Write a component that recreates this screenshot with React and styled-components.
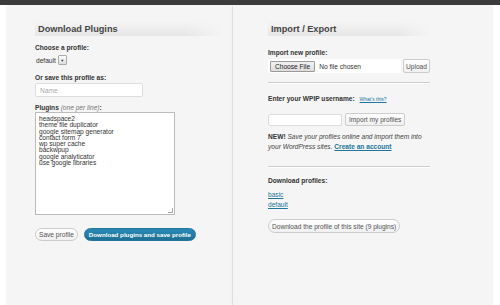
import React from "react";
import styled, { createGlobalStyle } from "styled-components";

const Global = createGlobalStyle`
  html, body { margin: 0; padding: 0; background: #fff; }
  body { font-family: "Liberation Sans", Arial, sans-serif; color: #333; }
`;

const TopBar = styled.div`
  height: 5px;
  background: #3b3b3b;
`;

const Wrap = styled.div`
  display: flex;
  padding: 1px 8px 0 7px;
  height: 299px;
`;

const Panel = styled.div`
  background: #f5f5f5;
  box-shadow: 0 0 2px rgba(0, 0, 0, 0.12);
  padding: 15px 0 0 ${p => p.$left}px;
  width: ${p => p.$width ? p.$width + "px" : "auto"};
  flex: ${p => p.$width ? "none" : 1};
  box-sizing: border-box;
  border-right: ${p => p.$divider ? "1px solid #e8e8e8" : "none"};
`;

const Heading = styled.h3`
  margin: 0 0 ${p => p.$mb}px;
  width: ${p => p.$w}px;
  height: 15px;
  line-height: 16px;
  padding-left: 3px;
  box-sizing: border-box;
  font-size: 9.2px;
  font-weight: bold;
  color: #464646;
  background:
    linear-gradient(to right, rgba(245,245,245,0) 80%, #f5f5f5),
    linear-gradient(#f5f5f5, #e6e6e6);
`;

const Label = styled.div`
  font-size: 6.6px;
  line-height: 8px;
  font-weight: bold;
  color: #333;
  margin: ${p => p.$m || "0"};
  em { font-weight: normal; font-style: italic; color: #777; }
`;

const SelectBox = styled.div`
  display: flex;
  width: fit-content;
  align-items: center;
  height: 10px;
  font-size: 6.6px;
  color: #333;
  margin: 3px 0 9px 1px;
`;

const Arrow = styled.span`
  display: inline-flex;
  align-items: center;
  justify-content: center;
  width: 9px;
  height: 10px;
  margin-left: 2px;
  border: 1px solid #aaa;
  border-radius: 1px;
  background: linear-gradient(#fff, #ddd);
  box-sizing: border-box;
  font-size: 4px;
  color: #333;
`;

const TextInput = styled.div`
  width: ${p => p.$w}px;
  height: ${p => p.$h || 14}px;
  box-sizing: border-box;
  background: #fff;
  border: 1px solid #ddd;
  border-radius: 2px;
  font-size: 6.6px;
  color: #aaa;
  padding: 3px 0 0 4px;
  margin: ${p => p.$m || 0};
`;

const TextArea = styled.div`
  position: relative;
  width: 140px;
  height: 103px;
  box-sizing: border-box;
  background: #fff;
  border: 1px solid #bbb;
  padding: 3px 3px;
  font-size: 6.6px;
  line-height: 6.3px;
  color: #333;
  margin: 0 0 13px;
  white-space: pre;
  &::after {
    content: "";
    position: absolute;
    right: 1px;
    bottom: 1px;
    width: 4px;
    height: 4px;
    border-right: 1px solid #aaa;
    border-bottom: 1px solid #aaa;
  }
`;

const Row = styled.div`
  display: flex;
  align-items: center;
  gap: ${p => p.$gap || 3}px;
  margin: ${p => p.$m || 0};
`;

const Button = styled.button`
  font-family: inherit;
  font-size: ${p => p.$primary ? 6.2 : 6.6}px;
  height: ${p => p.$h || 14}px;
  padding: 0 ${p => p.$px || 4}px;
  border-radius: ${p => p.$round ? 8 : 2}px;
  border: 1px solid ${p => p.$primary ? "#21759b" : "#ccc"};
  background: ${p => p.$primary ? "linear-gradient(#2a8bb7, #1e6f94)" : "linear-gradient(#fefefe, #f0f0f0)"};
  color: ${p => p.$primary ? "#fff" : "#555"};
  font-weight: ${p => p.$primary ? "bold" : "normal"};
  cursor: pointer;
  white-space: nowrap;
`;

const FileField = styled.div`
  display: flex;
  align-items: center;
  width: 133px;
  height: 14px;
  box-sizing: border-box;
  background: #fff;
  padding-left: 2px;
  gap: 4px;
  font-size: 6.6px;
  color: #333;
`;

const ChooseBtn = styled.span`
  display: inline-flex;
  align-items: center;
  height: 11px;
  padding: 0 4px;
  border: 1px solid #999;
  border-radius: 1px;
  background: linear-gradient(#f3f3f3, #ddd);
  box-sizing: border-box;
  font-size: 6.6px;
  color: #222;
`;

const Divider = styled.hr`
  width: 162px;
  margin: ${p => p.$m};
  border: 0;
  border-top: 1px solid #ccc;
  border-bottom: 1px solid #fff;
`;

const SmallLink = styled.a`
  font-size: 5px;
  font-weight: normal;
  color: #21759b;
  text-decoration: underline;
  margin-left: 3px;
`;

const Note = styled.p`
  margin: 0;
  font-size: 6.6px;
  line-height: 10px;
  color: #333;
  width: 162px;
  em { font-style: italic; color: #444; }
  a { color: #21759b; font-weight: bold; text-decoration: underline; }
`;

const ProfileLink = styled.a`
  display: block;
  font-size: 6.6px;
  line-height: 10px;
  color: #21759b;
  text-decoration: underline;
`;

const plugins = [
  "headspace2",
  "theme file duplicator",
  "google sitemap generator",
  "contact form 7",
  "wp super cache",
  "backwpup",
  "google analyticator",
  "use google libraries",
];

export default function App() {
  return (
    <>
      <Global />
      <TopBar />
      <Wrap>
        <Panel $width={226} $left={28} $divider>
          <Heading $w={188} $mb={8}>Download Plugins</Heading>
          <Label>Choose a profile:</Label>
          <SelectBox>
            default<Arrow>▼</Arrow>
          </SelectBox>
          <Label>Or save this profile as:</Label>
          <TextInput $w={108} $m="1px 0 7px">Name</TextInput>
          <Label>
            Plugins <em>(one per line)</em>:
          </Label>
          <TextArea>{plugins.join("\n")}</TextArea>
          <Row $gap={6}>
            <Button $round $h={13} $px={3}>Save profile</Button>
            <Button $round $primary $h={13} $px={4}>
              Download plugins and save profile
            </Button>
          </Row>
        </Panel>
        <Panel $left={35}>
          <Heading $w={162} $mb={13}>Import / Export</Heading>
          <Label>Import new profile:</Label>
          <Row $gap={2} $m="2px 0 0">
            <FileField>
              <ChooseBtn>Choose File</ChooseBtn>
              No file chosen
            </FileField>
            <Button $h={14} $px={2}>Upload</Button>
          </Row>
          <Divider $m="9px 0 11px" />
          <Label>
            Enter your WPIP username: <SmallLink>What's this?</SmallLink>
          </Label>
          <Row $gap={3} $m="10px 0 6px">
            <TextInput $w={74} $h={12} />
            <Button $h={13} $px={3}>Import my profiles</Button>
          </Row>
          <Note>
            <b>NEW!</b> <em>Save your profiles online and import them into your WordPress sites.</em>{" "}
            <a>Create an account</a>
          </Note>
          <Divider $m="14px 0 9px" />
          <Label $m="0 0 5px">Download profiles:</Label>
          <ProfileLink>basic</ProfileLink>
          <ProfileLink>default</ProfileLink>
          <Row $m="9px 0 0">
            <Button $round $h={14} $px={3}>
              Download the profile of this site (9 plugins)
            </Button>
          </Row>
        </Panel>
      </Wrap>
    </>
  );
}
